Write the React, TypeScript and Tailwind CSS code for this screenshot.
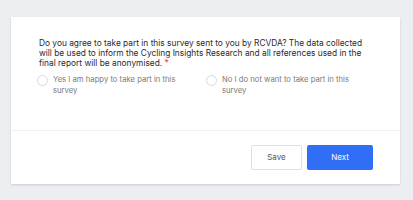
export default function App() {
  return (
    <div className="w-[413px] h-[200px] bg-[#eceef2] pt-[17px] pl-[11px]" style={{ fontFamily: 'Inter, "Liberation Sans", sans-serif' }}>
      <div className="bg-white w-[389px] h-[167px] shadow-[0_1px_2px_rgba(0,0,0,0.14)] flex flex-col">
        <div className="flex-1 pl-[28px] pt-[21px]">
          <p className="text-[8.35px] leading-[10px] text-[#2a2a2a] w-[332px]">
            Do you agree to take part in this survey sent to you by RCVDA? The data collected will be used to inform the Cycling Insights Research and all references used in the final report will be anonymised.{' '}
            <span className="text-[#e53e3e]">*</span>
          </p>
          <div className="mt-[8px] grid grid-cols-[169px_1fr] -ml-[2px]">
            <label className="flex items-start gap-[5px]">
              <span className="mt-[-1px] w-[11px] h-[11px] rounded-full border border-[#d6d9de] shrink-0" />
              <span className="text-[7.7px] leading-[10.5px] text-[#7a7a7a] w-[135px] -mt-[1px]">Yes I am happy to take part in this survey</span>
            </label>
            <label className="flex items-start gap-[5px]">
              <span className="mt-[-1px] w-[11px] h-[11px] rounded-full border border-[#d6d9de] shrink-0" />
              <span className="text-[7.7px] leading-[10.5px] text-[#7a7a7a] w-[145px] -mt-[1px]">No I do not want to take part in this survey</span>
            </label>
          </div>
        </div>
        <div className="border-t border-[#f0f1f3] h-[54px] flex items-center justify-end gap-[5px] pr-[27px] pb-[1px]">
          <button className="w-[51px] h-[25px] border border-[#dcdfe4] rounded-[2px] text-[8px] text-[#555] bg-white">Save</button>
          <button className="w-[66px] h-[25px] rounded-[2px] text-[8px] text-white bg-[#2f6ef5]">Next</button>
        </div>
      </div>
    </div>
  );
}
